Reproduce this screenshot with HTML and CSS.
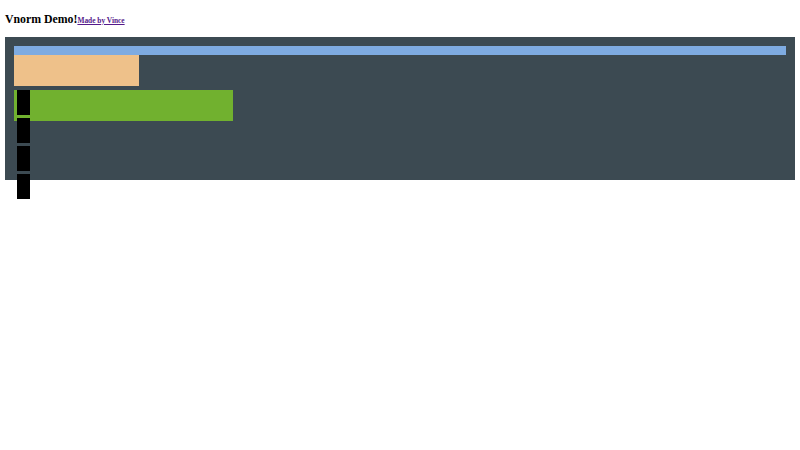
FILE: index.html
```html
<!DOCTYPE html>
<html>
<head>
<meta charset="utf-8">
<link rel="stylesheet" href="styles.css">
</head>
<body>
<h3 class="title">Vnorm Demo!<a class="credit" href="#">Made by Vince</a></h3>
<div class="panel">
  <div class="bar"></div>
  <div class="tan"></div>
  <div class="row">
    <div class="green"></div>
    <div class="stack">
      <div class="blk"></div>
      <div class="blk"></div>
      <div class="blk"></div>
      <div class="blk"></div>
    </div>
  </div>
</div>
</body>
</html>
```
FILE: styles.css
```css
html {
  min-height: 100%;
}
body {
  margin: 0;
  padding: 0 5px;
  min-height: 450px;
  font-family: "Liberation Serif", serif;
}
.title {
  margin: 0;
  padding-top: 12px;
  height: 25px;
  font-size: 11.8px;
  font-weight: bold;
  line-height: 15px;
  color: #000;
}
.credit {
  font-size: 7.4px;
  color: #551a8b;
  text-decoration: underline;
}
.panel {
  height: 143px;
  box-sizing: border-box;
  background: #3c4a52;
  padding: 9px;
  display: flex;
  flex-direction: column;
}
.bar {
  height: 9px;
  flex-shrink: 0;
  background: #7eabe1;
}
.tan {
  width: 125px;
  height: 31px;
  flex-shrink: 0;
  background: #eec18a;
}
.row {
  margin-top: 4px;
  flex-shrink: 0;
  display: grid;
  justify-items: start;
  align-items: start;
}
.green {
  grid-area: 1 / 1;
  width: 219px;
  height: 31px;
  background: #71b12f;
}
.stack {
  grid-area: 1 / 1;
  margin-left: 3px;
  display: flex;
  flex-direction: column;
  gap: 3px;
}
.blk {
  width: 13px;
  height: 25px;
  flex-shrink: 0;
  background: #000;
}
```
